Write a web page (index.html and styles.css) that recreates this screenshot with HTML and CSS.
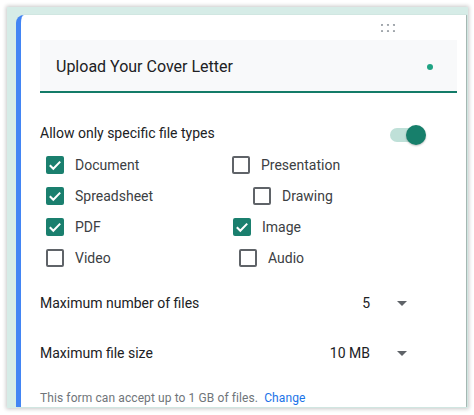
FILE: index.html
```html
<!DOCTYPE html>
<html>
<head>
<meta charset="utf-8">
<link rel="stylesheet" href="styles.css">
</head>
<body>
<div class="frame">
  <div class="card">
    <div class="handle-row">
      <svg class="handle" width="14" height="8" viewBox="0 0 14 8">
        <circle cx="1" cy="1" r="1.1"/><circle cx="7" cy="1" r="1.1"/><circle cx="13" cy="1" r="1.1"/>
        <circle cx="1" cy="7" r="1.1"/><circle cx="7" cy="7" r="1.1"/><circle cx="13" cy="7" r="1.1"/>
      </svg>
    </div>
    <div class="title-field">
      <span class="title">Upload Your Cover Letter</span>
      <span class="dot"></span>
    </div>
    <div class="allow-row">
      <span>Allow only specific file types</span>
      <span class="toggle"><span class="track"></span><span class="knob"></span></span>
    </div>
    <div class="types">
      <label class="opt"><span class="box checked"><svg viewBox="0 0 18 18"><polyline points="3.8,9.3 7.3,12.8 14.2,5.6"/></svg></span>Document</label>
      <label class="opt"><span class="box"></span>Presentation</label>
      <label class="opt"><span class="box checked"><svg viewBox="0 0 18 18"><polyline points="3.8,9.3 7.3,12.8 14.2,5.6"/></svg></span>Spreadsheet</label>
      <label class="opt shift-lg"><span class="box"></span>Drawing</label>
      <label class="opt"><span class="box checked"><svg viewBox="0 0 18 18"><polyline points="3.8,9.3 7.3,12.8 14.2,5.6"/></svg></span>PDF</label>
      <label class="opt shift-xs"><span class="box checked"><svg viewBox="0 0 18 18"><polyline points="3.8,9.3 7.3,12.8 14.2,5.6"/></svg></span>Image</label>
      <label class="opt"><span class="box"></span>Video</label>
      <label class="opt shift-sm"><span class="box"></span>Audio</label>
    </div>
    <div class="setting first">
      <span class="label">Maximum number of files</span>
      <span class="value">5</span>
      <span class="arrow"></span>
    </div>
    <div class="setting">
      <span class="label">Maximum file size</span>
      <span class="value">10 MB</span>
      <span class="arrow"></span>
    </div>
    <div class="footer">This form can accept up to 1 GB of files. <a class="link">Change</a></div>
  </div>
</div>
</body>
</html>
```

FILE: styles.css
```css
html, body {
  margin: 0;
  padding: 0;
  background: #ffffff;
}
body {
  width: 474px;
  height: 415px;
  overflow: hidden;
  font-family: Roboto, "Liberation Sans", Arial, sans-serif;
  color: #202124;
}
.frame {
  margin: 7px 0 0 7px;
  width: 461px;
  height: 401px;
  background: #d6ece7;
  box-shadow: 0 0 4px 1px rgba(0, 0, 0, 0.22);
  padding: 8px 0 0 9px;
  box-sizing: border-box;
}
.card {
  width: 450px;
  height: 392px;
  background: #ffffff;
  border-left: 5px solid #4285f4;
  border-top-left-radius: 8px;
  box-sizing: border-box;
  padding: 0 9px 0 19px;
  box-shadow: 1px 0 1px rgba(0, 0, 0, 0.25);
}
.handle-row {
  display: flex;
  justify-content: flex-end;
  padding: 9px 62px 0 0;
  height: 8px;
}
.handle {
  fill: #9aa0a6;
  display: block;
}
.title-field {
  margin-top: 8px;
  height: 51px;
  background: #f8f9fa;
  border-bottom: 2px solid #137b68;
  display: flex;
  align-items: center;
  justify-content: space-between;
  padding: 0 24px 0 16px;
}
.title {
  font-size: 16px;
  color: #202124;
  padding-top: 2px;
}
.dot {
  width: 6px;
  height: 6px;
  border-radius: 50%;
  background: #1fa383;
  margin-top: 3px;
}
.allow-row {
  margin-top: 28px;
  height: 24px;
  display: flex;
  align-items: center;
  justify-content: space-between;
  font-size: 14px;
}
.toggle {
  position: relative;
  width: 36px;
  height: 20px;
  margin-right: 31px;
  margin-top: 3px;
}
.track {
  position: absolute;
  left: 0;
  top: 3px;
  width: 32px;
  height: 14px;
  border-radius: 7px;
  background: #bfe0d8;
}
.knob {
  position: absolute;
  right: 0;
  top: 0;
  width: 20px;
  height: 20px;
  border-radius: 50%;
  background: #177f6b;
  box-shadow: 0 1px 2px rgba(0, 0, 0, 0.25);
}
.types {
  margin-top: 4px;
  padding-left: 6px;
  display: grid;
  grid-template-columns: 186px 1fr;
  grid-auto-rows: 31px;
}
.opt {
  display: flex;
  align-items: center;
  font-size: 14px;
  color: #3c4043;
}
.shift-xs { padding-left: 1px; }
.shift-sm { padding-left: 7px; }
.shift-lg { padding-left: 21px; }
.box {
  width: 18px;
  height: 18px;
  box-sizing: border-box;
  border: 2px solid #5f6368;
  border-radius: 2px;
  margin-right: 11px;
  flex: none;
  display: flex;
}
.box.checked {
  border-color: #1a7f6e;
  background: #1a7f6e;
}
.box svg {
  width: 18px;
  height: 18px;
  margin: -2px;
  fill: none;
  stroke: #ffffff;
  stroke-width: 2;
}
.setting {
  height: 40px;
  display: flex;
  align-items: center;
  font-size: 14px;
  margin-top: 10px;
}
.setting .label {
  flex: 1;
}
.setting .value {
  margin-right: 27px;
}
.arrow {
  width: 0;
  height: 0;
  border-left: 5px solid transparent;
  border-right: 5px solid transparent;
  border-top: 5px solid #5f6368;
  margin-right: 50px;
}
.footer {
  margin-top: 17px;
  font-size: 12px;
  line-height: 16px;
  letter-spacing: 0.1px;
  color: #70757a;
}
.link {
  color: #1a73e8;
  margin-left: 3px;
}
```
